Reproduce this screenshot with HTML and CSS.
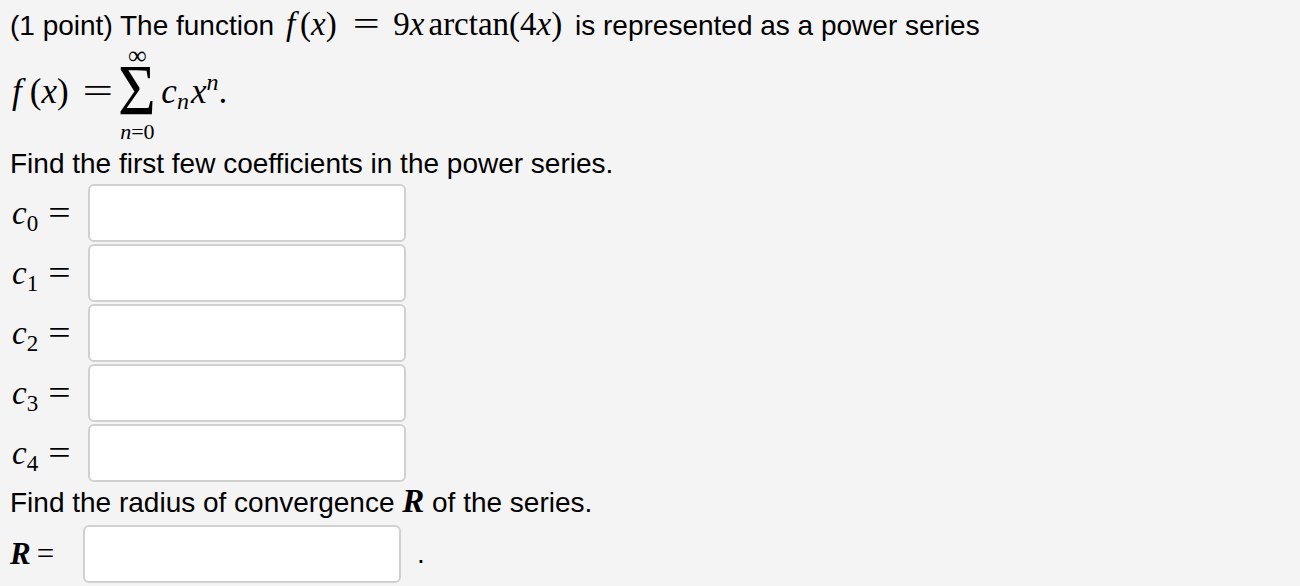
FILE: index.html
```html
<!DOCTYPE html>
<html>
<head>
<meta charset="utf-8">
<link rel="stylesheet" href="styles.css">
</head>
<body>
<div class="problem">
  <p class="text line1">(1 point) The function <span class="math"><i class="fi">f</i>(<i>x</i>)<span class="rel">=</span>9<i>x</i><span class="op">arctan</span>(4<i>x</i>)</span> is represented as a power series</p>
  <div class="sumline math">
    <span class="lhs"><i class="fi">f</i>(<i>x</i>)<span class="rel">=</span></span>
    <span class="sum">
      <span class="lim top">∞</span>
      <span class="sigma">Σ</span>
      <span class="lim bot"><i>n</i>=0</span>
    </span>
    <span class="term"><i>c</i><sub><i>n</i></sub><i class="xi">x</i><sup><i>n</i></sup>.</span>
  </div>
  <p class="text line3">Find the first few coefficients in the power series.</p>
  <div class="rows">
    <div class="row"><span class="label math"><i>c</i><sub>0</sub><span class="rel">=</span></span><span class="box"></span></div>
    <div class="row"><span class="label math"><i>c</i><sub>1</sub><span class="rel">=</span></span><span class="box"></span></div>
    <div class="row"><span class="label math"><i>c</i><sub>2</sub><span class="rel">=</span></span><span class="box"></span></div>
    <div class="row"><span class="label math"><i>c</i><sub>3</sub><span class="rel">=</span></span><span class="box"></span></div>
    <div class="row"><span class="label math"><i>c</i><sub>4</sub><span class="rel">=</span></span><span class="box"></span></div>
  </div>
  <p class="text line4">Find the radius of convergence <span class="math bi">R</span> of the series.</p>
  <div class="row rrow"><span class="label rlabel math"><span class="bi">R</span><span class="req">=</span></span><span class="box"></span><span class="dot">.</span></div>
</div>
</body>
</html>
```
FILE: styles.css
```css
html, body {
  margin: 0;
  padding: 0;
  background: #f4f4f4;
}
body {
  width: 1300px;
  height: 586px;
  overflow: hidden;
  color: #000;
}
.problem {
  padding: 5px 10px 0 10px;
}
.text {
  margin: 0;
  font-family: "Liberation Sans", Arial, sans-serif;
  font-size: 28px;
  line-height: 42px;
  height: 42px;
  white-space: nowrap;
}
.math {
  font-family: "Liberation Serif", "Times New Roman", serif;
  font-size: 33px;
}
.text .math { line-height: 1; }
.math i { font-style: italic; }
.fi { padding: 0 5px 0 2px; }
.rel {
  display: inline-block;
  transform: scaleX(1.45);
  margin: 0 18px 0 20px;
}
.op { padding-left: 4px; }
.line1 .math { padding: 0 5px 0 2px; }
.sumline {
  display: flex;
  align-items: center;
  height: 96px;
}
.lhs {
  font-size: 35px;
  padding-bottom: 6px;
}
.term {
  font-size: 35px;
  padding-bottom: 6px;
}
.xi { padding-left: 2px; }
.lhs .fi { padding: 0 8px 0 2px; }
.lhs .rel { margin: 0 9px 0 19px; transform: scaleX(1.55); }
.sum {
  display: flex;
  flex-direction: column;
  align-items: center;
  width: 42px;
  margin: 0 3px 0 0;
}
.lim {
  display: block;
  height: 20px;
  font-size: 22px;
}
.top { font-size: 26px; line-height: 20px; }
.bot { line-height: 16px; }
.sigma {
  display: block;
  height: 58px;
  line-height: 49px;
  font-family: "Liberation Serif", serif;
  font-size: 72px;
  transform: scaleX(0.9);
}
.term sub, .term sup { font-size: 24px; line-height: 0; }
.term sub { vertical-align: -6px; }
.term sup { vertical-align: 13px; }
.line3 { line-height: 42px; height: 41px; }
.rows {
  display: flex;
  flex-direction: column;
  gap: 2px;
}
.row {
  display: flex;
  align-items: center;
}
.label {
  width: 76px;
  padding-left: 2px;
  flex-shrink: 0;
}
.label sub {
  font-size: 23px;
  font-style: normal;
  vertical-align: -7px;
  line-height: 0;
}
.label .rel { margin: 0 0 0 12px; transform: scaleX(1.2); }
.box {
  display: block;
  width: 314px;
  height: 54px;
  background: #fff;
  border: 2px solid #d0d0d0;
  border-radius: 6px;
}
.line4 { margin-bottom: 1px; }
.bi { font-weight: bold; font-style: italic; }
.rlabel { width: 73px; padding-left: 0; font-size: 31px; }
.req { padding-left: 6px; }
.dot {
  font-family: "Liberation Sans", Arial, sans-serif;
  font-size: 28px;
  margin-left: 16px;
}
```
